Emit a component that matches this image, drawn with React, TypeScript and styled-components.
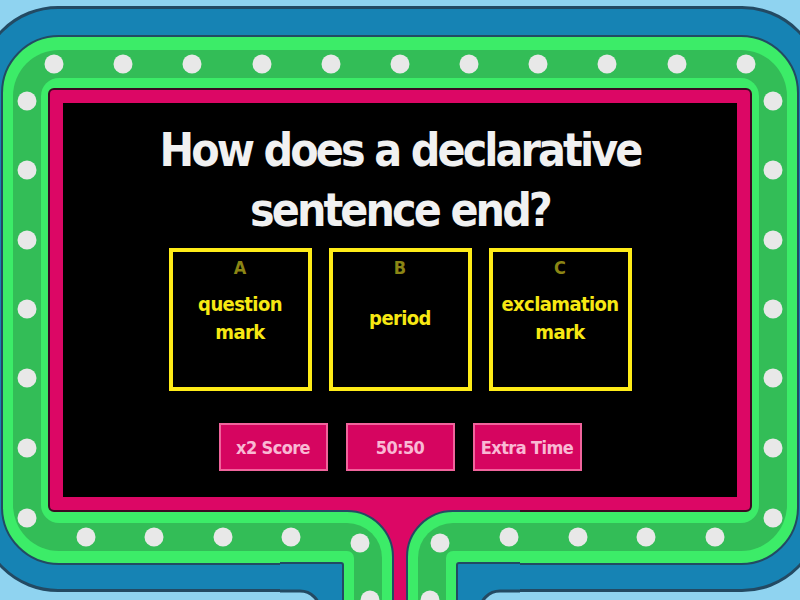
import styled, { createGlobalStyle } from 'styled-components';

const GlobalStyle = createGlobalStyle`
  html, body {
    margin: 0;
    padding: 0;
    background: #8fd3f0;
    overflow: hidden;
  }
  * {
    box-sizing: border-box;
  }
`

const answers = [
  { letter: 'A', text: 'question mark' },
  { letter: 'B', text: 'period' },
  { letter: 'C', text: 'exclamation mark' },
];

const powerUps = ['x2 Score', '50:50', 'Extra Time'];

const topDots = [54, 123, 192, 262, 331, 400, 469, 538, 607, 677, 746];
const sideDots = [101, 170, 240, 309, 378, 448, 518];
const bottomDots = [
  [86, 537], [154, 537], [223, 537], [291, 537], [360, 543], [370, 600],
  [440, 543], [430, 600], [509, 537], [578, 537], [646, 537], [715, 537],
];

const NAVY = '#234a63';
const BLUE = '#1683b4';
const GREEN = '#3cec68';
const DARK_GREEN = '#33bd57';
const PINK = '#dc0765';
const SKY = '#8fd3f0';

// one half of the split at the bottom, the other is mirrored
function NotchHalf() {
  return (
    <>
      <path d="M280 511 H347 A46 46 0 0 1 393 557 V604 H280 Z" fill={GREEN} />
      <path d="M280 523 H347 A35 35 0 0 1 382 558 V604 H280 Z" fill={DARK_GREEN} />
      <path d="M280 551 H347 A7 7 0 0 1 354 558 V604 H280 Z" fill={GREEN} />
      <path d="M280 563 H341 A2 2 0 0 1 343 565 V604 H280 Z" fill={BLUE} />
      <path d="M280 591 H300 A20 20 0 0 1 320 611 H280 Z" fill={SKY} />
      <path d="M280 511 H347 A46 46 0 0 1 393 557 V604" fill="none" stroke={NAVY} strokeWidth="2" />
      <path d="M280 563 H341 A2 2 0 0 1 343 565 V604" fill="none" stroke={NAVY} strokeWidth="2" />
      <path d="M280 591 H300 A20 20 0 0 1 320 611" fill="none" stroke={NAVY} strokeWidth="3" />
    </>
  );
}

function Lights() {
  return (
    <LightsLayer viewBox="0 0 800 600" width="800" height="600">
      <rect x="300" y="510" width="200" height="95" fill={PINK} />
      <g><NotchHalf /></g>
      <g transform="translate(800 0) scale(-1 1)"><NotchHalf /></g>
      {topDots.map((x) => (
        <circle key={`t${x}`} cx={x} cy={64} r={9.5} fill="#e8e8e8" />
      ))}
      {sideDots.map((y) => (
        <circle key={`l${y}`} cx={27} cy={y} r={9.5} fill="#e8e8e8" />
      ))}
      {sideDots.map((y) => (
        <circle key={`r${y}`} cx={773} cy={y} r={9.5} fill="#e8e8e8" />
      ))}
      {bottomDots.map(([x, y]) => (
        <circle key={`b${x}`} cx={x} cy={y} r={9.5} fill="#e8e8e8" />
      ))}
    </LightsLayer>
  );
}

export default function App() {
  return (
    <>
      <GlobalStyle />
      <Stage>
        <Shell>
          <GreenFrame>
            <DotBand>
              <InnerBand>
                <Board>
                  <Screen>
                    <Question>How does a declarative sentence end?</Question>

                    <AnswerRow>
                      {answers.map((a) => (
                        <AnswerCard key={a.letter}>
                          <Letter>{a.letter}</Letter>
                          <AnswerText>{a.text}</AnswerText>
                        </AnswerCard>
                      ))}
                    </AnswerRow>

                    <PowerRow>
                      {powerUps.map((p) => (
                        <PowerButton key={p}>{p}</PowerButton>
                      ))}
                    </PowerRow>
                  </Screen>
                </Board>
              </InnerBand>
            </DotBand>
          </GreenFrame>
        </Shell>
        <Lights />
      </Stage>
    </>
  )
}

const Stage = styled.div`
  position: relative;
  width: 800px;
  height: 600px;
  overflow: hidden;
  background: ${SKY};
  padding-top: 6px;
  font-family: "DejaVu Sans Condensed", "Liberation Sans Narrow", sans-serif;
`

const Shell = styled.div`
  margin: 0 -22px;
  height: 586px;
  border: 3px solid ${NAVY};
  border-radius: 80px;
  background: ${BLUE};
  padding: 26px 20px 24px;
`

const GreenFrame = styled.div`
  height: 100%;
  border: 2px solid ${NAVY};
  border-radius: 58px;
  background: ${GREEN};
  padding: 13px 10px 12px;
`

const DotBand = styled.div`
  height: 100%;
  border-radius: 46px;
  background: ${DARK_GREEN};
  padding: 28px;
`

const InnerBand = styled.div`
  height: 100%;
  border-radius: 18px;
  background: ${GREEN};
  padding: 10px 7px 11px;
`

const Board = styled.div`
  height: 100%;
  border: 2px solid #3b0a22;
  border-radius: 6px;
  background: ${PINK};
  padding: 13px;
`

const Screen = styled.div`
  height: 100%;
  background: #000;
  display: flex;
  flex-direction: column;
  align-items: center;
  padding-top: 17px;
`

const Question = styled.div`
  width: 560px;
  text-align: center;
  color: #f1f1f1;
  font-size: 46px;
  font-weight: 700;
  line-height: 60px;
  letter-spacing: -2.9px;
`

const AnswerRow = styled.div`
  display: flex;
  gap: 17px;
  margin-top: 8px;
`

const AnswerCard = styled.div`
  width: 143px;
  height: 143px;
  border: 4px solid #ffec18;
  display: flex;
  flex-direction: column;
  align-items: center;
  padding: 5px 2px 30px;
`

const Letter = styled.div`
  color: #8b8514;
  font-size: 18px;
  font-weight: 700;
  line-height: 22px;
`

const AnswerText = styled.div`
  flex: 1;
  display: flex;
  align-items: center;
  justify-content: center;
  text-align: center;
  color: #f7e813;
  font-size: 20px;
  font-weight: 700;
  line-height: 28px;
  letter-spacing: -0.6px;
`

const PowerRow = styled.div`
  display: flex;
  gap: 18px;
  margin-top: 32px;
`

const PowerButton = styled.div`
  width: 109px;
  height: 48px;
  display: flex;
  align-items: center;
  justify-content: center;
  background: #d60560;
  border: 2px solid #f0649c;
  color: #f9b9d4;
  font-size: 18px;
  font-weight: 700;
  letter-spacing: -0.6px;
`

const LightsLayer = styled.svg`
  position: absolute;
  left: 0;
  top: 0;
  pointer-events: none;
`
